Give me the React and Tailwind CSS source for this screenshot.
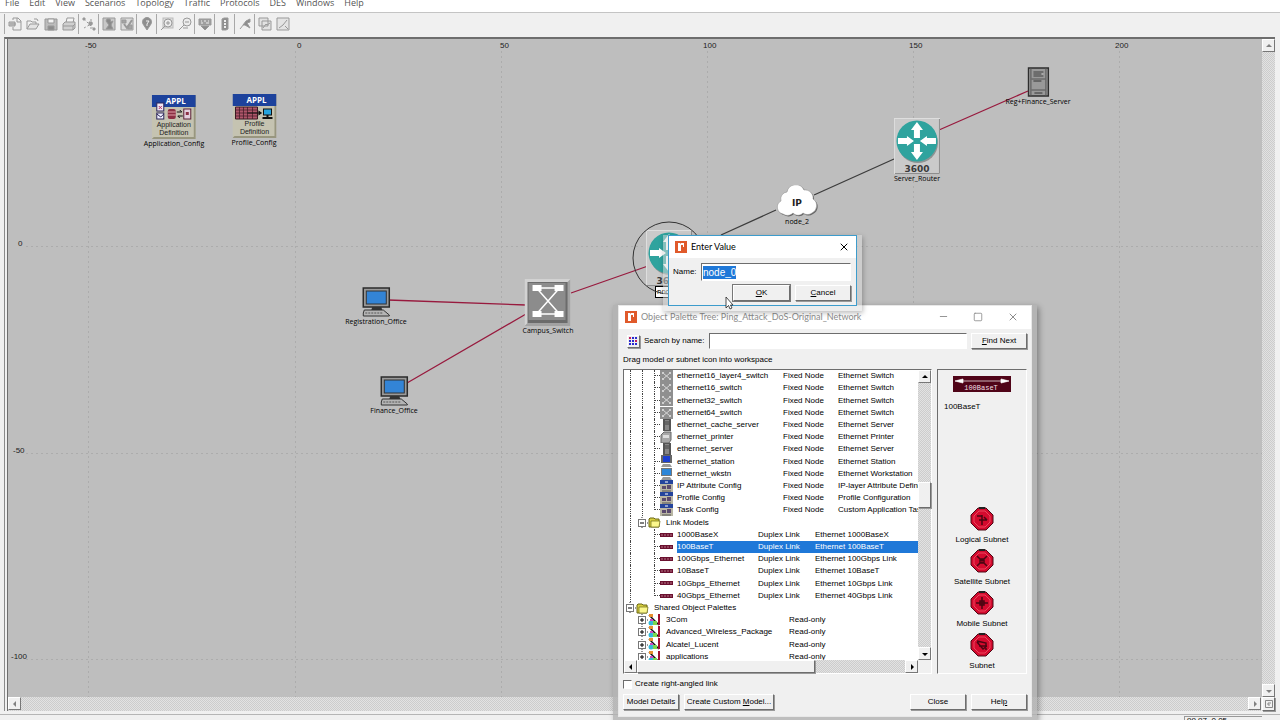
import { useState } from "react";
import { Minus, Square, X } from "lucide-react";

const menus = ["File", "Edit", "View", "Scenarios", "Topology", "Traffic", "Protocols", "DES", "Windows", "Help"];

const toolGroups = [
  ["New", "Open", "Save", "Print"],
  ["Palette"],
  ["Fail", "Recover"],
  ["Location"],
  ["Zoom In", "Zoom Out"],
  ["Traffic"],
  ["Run"],
  ["Results"],
  ["View Results", "Hide Graphs"],
];

const toolArt = {
  "New": <><path d="M5 3V1h5l3 3v9H5v-3" /><path d="M1 5h6v4H1z" fill="#c8c8c8" /><path d="M9 1v4h4M2 7h6" /></>,
  "Open": <><path d="M1 12V4h4l1 1h4v2" /><path d="M1 12l3-5h9l-3 5z" fill="#e4e4e4" /><path d="M8 2h3l1 2" /></>,
  "Save": <><path d="M1 2h12v11H1z" fill="#bcbcbc" /><path d="M4 2h6v4H4z" fill="#f4f4f4" /><path d="M4 9h6v4H4z" fill="#8c8c8c" /></>,
  "Print": <><path d="M4 6l1-5h7l-1 5" fill="#f4f4f4" /><path d="M1 7l2-2h10v6l-2 2H1z" fill="#d0d0d0" /><path d="M1 9h10v4M11 9l2-2" /></>,
  "Palette": <><path d="M2 2l4 4 5 5M2 11l9-5M9 2v10" strokeDasharray="2 2" /><path d="M1 1h2v2H1zM11 11h2v2h-2zM7 5h3v3H7z" fill="#999" /></>,
  "Fail": <><path d="M1 1h12v12H1z" fill="#c8c8c8" /><path d="M5 2h3l1 3 2-1-2 4 2 4H4l3-4-3-4z" fill="#8a8a8a" /></>,
  "Recover": <><path d="M1 1h12v12H1z" fill="#dcdcdc" /><path d="M2 3h4v3H2zM8 8h4v4H8z" fill="#a4a4a4" /><path d="M4 7l3 4 5-8" strokeWidth="2" /></>,
  "Location": <><path d="M7 13L3 7a4.500 4.500 0 1 1 8 0z" fill="#8e8e8e" /><path d="M6 4h3L7 7v2" stroke="#f0f0f0" /></>,
  "Zoom In": <><rect x="3" y="1" width="10" height="10" fill="#dedede" stroke="#bbb" /><circle cx="8" cy="6" r="4" fill="#ececec" /><path d="M5 9l-4 4M6 6h4M8 4v4" /></>,
  "Zoom Out": <><circle cx="9" cy="5" r="4" fill="#ececec" /><path d="M6 8l-5 5M7 5h4M5 11h5" /></>,
  "Traffic": <><path d="M1 2h12v6H1z" fill="#a0a0a0" /><path d="M3 4h1M6 4h2M10 4h1M3 6h2M8 6h3" stroke="#eee" /><path d="M3 9h8l-4 4z" fill="#8c8c8c" /></>,
  "Run": <><path d="M4 2l2-1h4v11l-2 1H4z" fill="#8f8f8f" /><path d="M6 4h2M6 7h2M6 10h2" stroke="#eee" strokeWidth="2" /></>,
  "Results": <><path d="M2 12l4-5" /><path d="M5 8l3-4 4-2v3L9 6l3 5-5-3z" fill="#8c8c8c" /></>,
  "View Results": <><path d="M1 1h9v8H1zM4 4h9v9H4z" fill="#e2e2e2" /><path d="M5 11l3-4 1 1 3-2" /></>,
  "Hide Graphs": <><path d="M1 1h12v12H1z" fill="#e4e4e4" /><path d="M3 11l4-3 4-5M9 9l3 3" /></>,
};

const folder = (
  <svg viewBox="0 0 13 12" className="h-3 w-[13px]">
    <path d="M1 3l1-1h4l1 1h4v8H1z" fill="#d8d040" stroke="#6b6714" />
    <path d="M3 5h9l-1 6H3z" fill="#fbf78c" stroke="#6b6714" strokeWidth=".7" />
  </svg>
);

const rowArt = {
  sw: <><rect width="13" height="12" fill="#8f8f8f" /><path d="M3 3l7 6M10 3L3 9" stroke="#d8d8d8" /><path d="M2 2h2v2H2zM9 2h2v2H9zM2 8h2v2H2zM9 8h2v2H9z" fill="#d0d0d0" /></>,
  server: <><rect x="3" width="8" height="12" fill="#555" /><rect x="5" y="1" width="4" height="10" fill="#888" /><path d="M5 3h4M5 5h4" stroke="#444" /></>,
  printer: <><path d="M1 4l3-3h7v8l-2 3H1z" fill="#a7a7a7" stroke="#666" /><path d="M3 4h6v3H3z" fill="#ddd" /></>,
  station: <><rect x="1" width="11" height="8" fill="#666" /><rect x="3" y="1" width="7" height="6" fill="#1c3fd0" /><path d="M3 9h7l2 3H1z" fill="#999" /></>,
  wkstn: <><rect x="1" width="11" height="8" fill="#777" /><rect x="2" y="1" width="9" height="6" fill="#2d86d8" /><path d="M3 9h7l2 3H1z" fill="#999" /></>,
  config: <><rect width="13" height="12" fill="#b9b6a4" /><rect width="13" height="4" fill="#24449c" /><path d="M5 2h3" stroke="#fff" /><path d="M2 6h4v3H2zM7 5h4v4H7z" fill="#5b4a6e" /><path d="M2 11h9" stroke="#555" /></>,
  link: <><path d="M0 4h13v4H0z" fill="#6b1030" /><path d="M1 6h11" stroke="#b87888" strokeDasharray="2 1" /></>,
  shared: <><path d="M1 1l10 10" stroke="#111" strokeWidth="1.500" /><path d="M11 0v11" stroke="#a01030" strokeWidth="2" /><circle cx="3" cy="9" r="2.500" fill="#35b8d8" /><path d="M1 0h4v3H1z" fill="#e89030" /><path d="M5 7h4v4H5z" fill="#7ad850" /><path d="M2 5h3v2H2z" fill="#d048c0" /></>,
};

const fixed = (name, type, icon) => ({ cells: ["V", "V", "T"], icon, name, kind: "Fixed Node", type });
const duplex = (name, type, last) => ({ cells: ["V", "", last ? "L" : "T"], icon: "link", name, kind: "Duplex Link", type });
const shared = (name) => ({ cells: ["", "+"], icon: "shared", name, kind: "Read-only" });

const rows = [
  fixed("ethernet16_layer4_switch", "Ethernet Switch", "sw"),
  fixed("ethernet16_switch", "Ethernet Switch", "sw"),
  fixed("ethernet32_switch", "Ethernet Switch", "sw"),
  fixed("ethernet64_switch", "Ethernet Switch", "sw"),
  fixed("ethernet_cache_server", "Ethernet Server", "server"),
  fixed("ethernet_printer", "Ethernet Printer", "printer"),
  fixed("ethernet_server", "Ethernet Server", "server"),
  fixed("ethernet_station", "Ethernet Station", "station"),
  fixed("ethernet_wkstn", "Ethernet Workstation", "wkstn"),
  fixed("IP Attribute Config", "IP-layer Attribute Definer", "config"),
  fixed("Profile Config", "Profile Configuration", "config"),
  { ...fixed("Task Config", "Custom Application Task", "config"), cells: ["V", "V", "L"] },
  { cells: ["V", "-"], name: "Link Models" },
  duplex("1000BaseX", "Ethernet 1000BaseX"),
  duplex("100BaseT", "Ethernet 100BaseT"),
  duplex("100Gbps_Ethernet", "Ethernet 100Gbps Link"),
  duplex("10BaseT", "Ethernet 10BaseT"),
  duplex("10Gbps_Ethernet", "Ethernet 10Gbps Link"),
  duplex("40Gbps_Ethernet", "Ethernet 40Gbps Link", true),
  { cells: ["-"], name: "Shared Object Palettes" },
  shared("3Com"),
  shared("Advanced_Wireless_Package"),
  shared("Alcatel_Lucent"),
  shared("applications"),
];

const raised = "border border-t-white border-l-white border-r-[#6d6d6d] border-b-[#6d6d6d] bg-[#f0f0f0] shadow-[1px_1px_0_#9a9a9a]";
const sunken = "border border-t-[#6d6d6d] border-l-[#6d6d6d] border-r-white border-b-white";
const track = "bg-[#d6d6d6] bg-[repeating-conic-gradient(#cccccc_0_25%,#e2e2e2_0_50%)] bg-[length:2px_2px]";

const arrows = { up: "M2 6l3-3 3 3z", down: "M2 4l3 3 3-3z", left: "M6 2L3 5l3 3z", right: "M4 2l3 3-3 3z" };

function ScrollArrow({ dir, dim }) {
  return (
    <button aria-label={`Scroll ${dir}`} className="grid size-[13px] shrink-0 place-items-center border border-t-white border-l-white border-r-[#777] border-b-[#777] bg-[#f0f0f0]">
      <svg viewBox="0 0 10 10" className="size-[10px]"><path d={arrows[dir]} fill={dim ? "#808080" : "#000"} /></svg>
    </button>
  );
}

function Logo() {
  return (
    <svg viewBox="0 0 12 12" className="size-3 shrink-0">
      <rect width="12" height="12" fill="#e05a2b" />
      <path d="M3 2h2l1 1v7H3zM6 2h3v4H8V4H6z" fill="#fff" />
    </svg>
  );
}

function Button({ children, className }) {
  return <button className={`${raised} h-4 whitespace-nowrap leading-3 ${className}`}>{children}</button>;
}

// One indent step of the tree: guide line, branch, or expander box
function Cell({ kind }) {
  if (kind === "+" || kind === "-") {
    return (
      <span className="grid w-3 shrink-0 place-items-center">
        <svg viewBox="0 0 12 12" className="h-3 w-3">
          <path d="M6 0v12M9 6h3" stroke="#333" strokeDasharray="1 1" />
          <rect x="2.500" y="2.500" width="7" height="7" fill="#fff" stroke="#777" />
          <path d={kind === "+" ? "M4 6h4M6 4v4" : "M4 6h4"} stroke="#000" />
        </svg>
      </span>
    );
  }
  return (
    <span className="flex w-3 shrink-0 pl-1.5">
      <span className={`w-1.5 ${kind === "V" || kind === "T" ? "border-l border-dotted border-[#444]" : ""}`}>
        {kind === "T" && <span className="block h-1/2 border-b border-dotted border-[#444]" />}
        {kind === "L" && <span className="block h-1/2 border-b border-l border-dotted border-[#444]" />}
      </span>
    </span>
  );
}

function TreeRow({ row, selected, onSelect }) {
  const link = row.kind === "Duplex Link";
  const ro = row.kind === "Read-only";
  const kindWidth = link ? "w-[57px]" : "w-[55px]";
  const nameWidth = link ? "w-[81px]" : ro ? "w-[123px]" : row.kind ? "w-[106px]" : "w-[180px]";
  return (
    <div role="treeitem" aria-selected={selected} onClick={onSelect} className="flex min-h-0 flex-1 whitespace-nowrap">
      {row.cells.map((c, i) => <Cell key={i} kind={c} />)}
      {row.icon ? <svg viewBox="0 0 13 12" className="h-3 w-[13px] shrink-0">{rowArt[row.icon]}</svg> : folder}
      <div className={`flex flex-1 items-center ${row.cells.length === 3 ? "ml-1" : "ml-[5px]"} ${selected ? "bg-[#1f78d8] text-white" : ""}`}>
        <span className={`${nameWidth} shrink-0 leading-3`}>{row.name}</span>
        <span className={`${kindWidth} shrink-0 leading-3`}>{row.kind}</span>
        <span className="leading-3">{row.type}</span>
      </div>
    </div>
  );
}

function RouterIcon() {
  return (
    <svg viewBox="0 0 46 56" className="h-14 w-[46px]">
      <rect x=".5" y=".5" width="45" height="55" fill="#cacaca" stroke="#dedede" />
      <path d="M45.500 1v54.500H1" fill="none" stroke="#8d8d8d" />
      <circle cx="24" cy="25" r="20" fill="#8d9393" />
      <circle cx="23" cy="23" r="20.500" fill="#2fa39e" />
      <path d="M23 4l6 8h-3v8h-6v-8h-3zM23 42l-6-8h3v-8h6v8h3zM20 23l-7 5v-2H4v-6h9v-2zM26 23l7-5v2h9v6h-9v2z" fill="#fff" />
      <text x="23" y="54" textAnchor="middle" fontSize="9" fontWeight="700" fill="#3a3a3a" fontFamily="DejaVu Sans, sans-serif">3600</text>
    </svg>
  );
}

function ComputerIcon() {
  return (
    <svg viewBox="0 0 30 30" className="size-[30px]">
      <rect x="2" y="1" width="26" height="19" fill="#9a9a9a" stroke="#2b2b2b" strokeWidth="1.500" />
      <rect x="5" y="4" width="20" height="13" fill="#3384d6" stroke="#333" />
      <path d="M11 20h9l1 3H10z" fill="#333" />
      <path d="M3 23h19l6 5v1H2v-3z" fill="#b5b5b5" stroke="#333" />
      <path d="M4 26h17" stroke="#555" strokeDasharray="2 1" />
    </svg>
  );
}

function ServerIcon() {
  return (
    <svg viewBox="0 0 22 30" className="h-[30px] w-[22px]">
      <rect x="1" y="1" width="20" height="28" fill="#999" stroke="#2e2e2e" strokeWidth="1.500" />
      <path d="M3.500 1v28M18.500 1v28M4 12h14M4 23h14" stroke="#555" fill="none" />
      <path d="M6 4h10v6H6z" fill="#a8a8a8" />
      <path d="M6 5h10M6 7h8M6 9h10M6 14h8M7 26h8" stroke="#333" />
    </svg>
  );
}

function SwitchIcon() {
  return (
    <svg viewBox="0 0 46 47" className="h-[47px] w-[46px]">
      <rect width="46" height="47" fill="#d2d2d2" />
      <path d="M46 0v47H0l4-4h38V4z" fill="#a2a2a2" />
      <rect x="3" y="3" width="40" height="41" fill="#6b6b6b" />
      <rect x="4" y="4" width="37" height="37" fill="#8c8c8c" />
      <path d="M12 9h23M12 35h23M12 9l23 26M35 9L12 35" stroke="#fff" strokeWidth="1.500" />
      <path d="M8 6h9v6H8zM30 6h9v6h-9zM8 32h9v6H8zM30 32h9v6h-9z" fill="#fff" />
    </svg>
  );
}

function ConfigIcon({ profile }) {
  return (
    <svg viewBox="0 0 44 44" className="size-11">
      <rect width="44" height="44" fill="#c5c3b1" />
      <path d="M44 0v44H0l2-2h40V2z" fill="#98967f" />
      <rect width="44" height="12" fill="#1d429c" />
      <text x="24" y="9" textAnchor="middle" fontSize="8" fontWeight="700" fill="#fff" fontFamily="Open Sans, sans-serif">APPL</text>
      {profile ? (
        <>
          <path d="M3 13h22v12H3z" fill="#b0566a" stroke="#3b1822" />
          <path d="M3 16h22M3 19h22M3 22h22M7 13v12M11 13v12M15 13v12M20 13v12" stroke="#3b1822" strokeWidth=".7" />
          <path d="M15 19h13M26 17l3 2-3 2" stroke="#111" fill="#111" />
          <rect x="31" y="15" width="8" height="6" fill="#26a4de" stroke="#111" />
          <path d="M35 21v3M30 24h10" stroke="#111" strokeWidth="2" />
        </>
      ) : (
        <>
          <rect x="5" y="8" width="7" height="8" fill="#f0e6f4" stroke="#2b2558" />
          <path d="M7 11l3 3M10 11l-3 3" stroke="#b03060" />
          <rect x="5" y="18" width="7" height="6" fill="#f0f0ff" stroke="#2b2558" />
          <path d="M5 19l4 3 3-3" stroke="#2b2558" fill="none" />
          <rect x="16" y="14" width="8" height="10" rx="2" fill="#8c3044" />
          <path d="M16 17h8M16 20h8" stroke="#e0a0a8" />
          <path d="M25 17h5l-2-2M31 21h-5l2 2" stroke="#111" fill="none" />
          <rect x="32" y="14" width="7" height="10" fill="#e4d0dc" stroke="#5b2036" />
          <rect x="34" y="17" width="3" height="3" fill="#8c3044" />
        </>
      )}
      <g fontSize="7" fill="#222" textAnchor="middle" fontFamily="Liberation Sans, sans-serif">
        <text x="22" y="32">{profile ? "Profile" : "Application"}</text>
        <text x="22" y="40">Definition</text>
      </g>
    </svg>
  );
}

const cloud = "M8 29a7 7 0 0 1-2-13 7 7 0 0 1 6-9 9 9 0 0 1 17-2 8 8 0 0 1 9 9 8 8 0 0 1-1 14c-3 2-6 2-9 0-3 3-7 3-10 0-3 3-7 3-10 1z";

function CloudIcon() {
  return (
    <svg viewBox="0 0 44 32" className="h-8 w-11">
      <path d={cloud} fill="#666" transform="translate(1 1)" />
      <path d={cloud} fill="#fff" stroke="#888" strokeWidth=".5" />
      <text x="22" y="21" textAnchor="middle" fontSize="9" fontWeight="700" fill="#222" fontFamily="DejaVu Sans, sans-serif">IP</text>
    </svg>
  );
}

const nodes = [
  { label: "Application_Config", at: "left-[166px] top-[56px]", icon: <ConfigIcon /> },
  { label: "Profile_Config", at: "left-[246px] top-[55px]", icon: <ConfigIcon profile /> },
  { label: "Registration_Office", at: "left-[368px] top-[248px]", icon: <ComputerIcon /> },
  { label: "Finance_Office", at: "left-[386px] top-[337px]", icon: <ComputerIcon /> },
  { label: "Campus_Switch", at: "left-[540px] top-[240px]", icon: <SwitchIcon /> },
  { label: "node_0", at: "left-[661px] top-[191px]", icon: <RouterIcon />, active: true },
  { label: "node_2", at: "left-[789px] top-[146px]", icon: <CloudIcon /> },
  { label: "Server_Router", at: "left-[909px] top-[79px]", icon: <RouterIcon /> },
  { label: "Reg+Finance_Server", at: "left-[1030px] top-[28px]", icon: <ServerIcon /> },
];

const ticks = [
  { text: "-50", at: "left-[77px] top-[2px]" },
  { text: "0", at: "left-[289px] top-[2px]" },
  { text: "50", at: "left-[492px] top-[2px]" },
  { text: "100", at: "left-[695px] top-[2px]" },
  { text: "150", at: "left-[901px] top-[2px]" },
  { text: "200", at: "left-[1107px] top-[2px]" },
  { text: "0", at: "left-[10px] top-[200px]" },
  { text: "-50", at: "left-[5px] top-[407px]" },
  { text: "-100", at: "left-[3px] top-[613px]" },
];

function Canvas() {
  return (
    <section className="relative min-h-0 flex-1 overflow-hidden bg-[#bebebe]">
      <svg className="absolute inset-0 h-full w-full">
        <g stroke="#acacac" strokeDasharray="2 3">
          {[80, 287, 493, 699, 905, 1111].map((x) => <line key={x} x1={x + 0.5} x2={x + 0.5} y1="12" y2="100%" />)}
          {[207, 414, 620].map((y) => <line key={y} x1="18" x2="100%" y1={y + 0.5} y2={y + 0.5} />)}
        </g>
        <g stroke="#981a3e" strokeWidth="1.300">
          <path d="M380 261L518 266M399 344L518 275M563 254L640 227M931 91L1020 52" />
        </g>
        <path d="M713 196L768 171M806 156L886 120" stroke="#3c3c3c" strokeWidth="1.300" />
      </svg>
      {ticks.map((t, i) => (
        <span key={i} className={`absolute ${t.at} text-[8px] leading-[10px] text-[#222]`}>{t.text}</span>
      ))}
      {nodes.map((n) => (
        <div key={n.label} className={`absolute ${n.at} flex -translate-x-1/2 flex-col items-center`}>
          {n.icon}
          <span className={`font-['Open_Sans',sans-serif] text-[7px] leading-[10px] ${n.active ? "border border-black bg-white px-px" : ""}`}>{n.label}</span>
        </div>
      ))}
      <svg className="absolute left-[624px] top-[182px] size-[74px]" viewBox="0 0 74 74">
        <circle cx="37" cy="37" r="36" fill="none" stroke="#333" />
      </svg>
    </section>
  );
}

const subnetArt = {
  "Logical Subnet": "M7 9h5v4h5M12 8v10M9 13h8M14 10l3 3",
  "Satellite Subnet": "M7 7l10 10M17 7L7 17M10 10h4v4h-4z",
  "Mobile Subnet": "M12 6v12M6 12h12M10 10h4v4h-4z",
  "Subnet": "M7 8l9 2v7M7 9l6 7 4-3M9 13h8",
};

function Subnet({ label }) {
  return (
    <button className="flex flex-col items-center pt-0.5">
      <svg viewBox="0 0 24 24" className="size-6">
        <path d="M8 1h8l7 7v8l-7 7H8l-7-7V8z" fill="#d40a2e" stroke="#4a0814" />
        <path d="M9 4h6l5 5v6l-5 5H9l-5-5V9z" fill="none" stroke="#f0556a" strokeWidth=".8" />
        <path d={subnetArt[label]} fill="none" stroke="#4a0612" strokeWidth="1.500" />
        <path d="M9 1h6" stroke="#222" strokeWidth="2" />
      </svg>
      <span className="mt-0.5 leading-[14px]">{label}</span>
    </button>
  );
}

function PaletteWindow() {
  const [selected, setSelected] = useState("100BaseT");
  const [search, setSearch] = useState("");
  return (
    <div className="absolute left-[613px] top-[305px] border-x-[5px] border-b-4 border-[#b2b2b2]/80 shadow-[2px_2px_6px_#0005]">
      <div className="flex h-[412px] w-[414px] flex-col border border-[#e8e8e8] bg-[#f0f0f0]">
        <div className="flex h-[23px] shrink-0 items-center bg-white pb-0.5 pl-1.5 pr-3 text-[#8c8c8c]">
          <Logo />
          <h2 className="ml-1 flex-1 font-['Lato',sans-serif] text-[9px] leading-3">Object Palette Tree: Ping_Attack_DoS-Original_Network</h2>
          <div className="flex items-center gap-6">
            <button aria-label="Minimize"><Minus size={11} strokeWidth={2} /></button>
            <button aria-label="Maximize"><Square size={10} strokeWidth={2} /></button>
            <button aria-label="Close"><X size={12} strokeWidth={2} /></button>
          </div>
        </div>
        <div className="flex min-h-0 flex-1 flex-col px-1 pb-[6px] pt-1">
          <div className="flex shrink-0 items-center">
            <button aria-label="Icon view" className={`${raised} ml-1 grid size-[13px] place-items-center`}>
              <svg viewBox="0 0 9 9" className="size-[9px]">
                <path d="M0 1h9M0 4h9M0 7h9" stroke="#2a2ad0" strokeWidth="2" strokeDasharray="2 1" />
                <path d="M0 1h3M6 4h3" stroke="#c02060" strokeWidth="2" strokeDasharray="2 1" />
              </svg>
            </button>
            <label htmlFor="search" className="ml-1 w-[65px] whitespace-nowrap">Search by name:</label>
            <input id="search" value={search} onChange={(e) => setSearch(e.target.value)} className={`${sunken} h-4 min-w-0 flex-1 bg-white px-1 outline-none`} />
            <Button className="ml-1 w-14"><u>F</u>ind Next</Button>
          </div>
          <p className="mb-0.5 mt-1 leading-[14px]">Drag model or subnet icon into workspace</p>
          <div className="flex min-h-0 flex-1 gap-[5px]">
            <div className={`${sunken} flex min-w-0 flex-1 flex-col bg-white`}>
              <div className="flex min-h-0 flex-1">
                <div className="min-w-0 flex-1 overflow-hidden">
                  <div role="tree" className="flex h-[293px] flex-col">
                    {rows.map((r) => (
                      <TreeRow key={r.name} row={r} selected={selected === r.name} onSelect={() => setSelected(r.name)} />
                    ))}
                  </div>
                </div>
                <div className={`flex w-[13px] flex-col ${track}`}>
                  <ScrollArrow dir="up" />
                  <div className="flex-[100]" />
                  <div className={`${raised} h-[26px]`} />
                  <div className="flex-[140]" />
                  <ScrollArrow dir="down" />
                </div>
              </div>
              <div className="flex h-[13px] shrink-0 bg-[#f0f0f0]">
                <div className={`flex flex-1 ${track}`}>
                  <ScrollArrow dir="left" />
                  <div className={`${raised} w-[178px]`} />
                  <div className="flex-1" />
                  <ScrollArrow dir="right" />
                </div>
                <div className="w-[13px]" />
              </div>
            </div>
            <div className={`${sunken} flex w-[90px] shrink-0 flex-col px-1 pt-[6px]`}>
              <svg viewBox="0 0 58 16" className="h-4 w-[58px] self-center">
                <rect width="58" height="16" fill="#500418" />
                <path d="M4 5h50M2 5l8-2v4zM56 5l-8-2v4z" stroke="#fff" fill="#fff" strokeWidth=".7" />
                <text x="28" y="14" textAnchor="middle" fontSize="7" fill="#f0dfe2" fontFamily="Liberation Mono, monospace">100BaseT</text>
              </svg>
              <span className="ml-[2px] mt-2 leading-[14px]">100BaseT</span>
              <div className="mt-auto flex flex-col">
                {Object.keys(subnetArt).map((s) => <Subnet key={s} label={s} />)}
              </div>
            </div>
          </div>
          <label className="mt-1 flex h-3 shrink-0 items-center gap-[3px]">
            <input type="checkbox" className={`${sunken} size-[9px] appearance-none bg-white`} />
            Create right-angled link
          </label>
          <div className="mt-1 flex shrink-0 gap-[5px]">
            <Button className="w-14">Model Details</Button>
            <Button className="w-[90px]">Create Custom <u>M</u>odel...</Button>
            <Button className="ml-auto w-14">Close</Button>
            <Button className="w-14">Hel<u>p</u></Button>
          </div>
        </div>
      </div>
    </div>
  );
}

function EnterValueDialog() {
  const [name, setName] = useState("node_0");
  return (
    <form onSubmit={(e) => e.preventDefault()} className="absolute left-[663px] top-[235px] border-x-[5px] border-b-[5px] border-[#dcdcdc]/50 shadow-[1px_2px_5px_#0004]">
      <div className="w-[189px] border border-[#3d9ccc] bg-[#f0f0f0]">
        <div className="flex h-[22px] items-center bg-white px-1.5">
          <Logo />
          <h2 className="ml-1 flex-1 font-['Lato',sans-serif] text-[9px] leading-3">Enter Value</h2>
          <button type="button" aria-label="Close"><X size={12} strokeWidth={2} /></button>
        </div>
        <div className="flex items-center pl-1 pr-[5px] pt-[5px]">
          <label htmlFor="name" className="w-7">Name:</label>
          <div className={`${sunken} flex h-[18px] flex-1 items-center bg-white px-px`}>
            <input id="name" value={name} onChange={(e) => setName(e.target.value)} className="h-[13px] w-[33px] bg-[#1f78d8] text-[10px] text-white outline-none" />
          </div>
        </div>
        <div className="flex justify-end gap-[5px] py-1 pr-[5px]">
          <Button className="w-[57px] outline outline-[#777]"><u>O</u>K</Button>
          <Button className="w-[56px]"><u>C</u>ancel</Button>
        </div>
      </div>
    </form>
  );
}

export default function App() {
  return (
    <div className="relative flex h-screen flex-col overflow-hidden bg-[#f0f0f0] font-['Liberation_Sans',sans-serif] text-[8px] text-black">
      <nav className="-mt-1.5 flex h-[18px] shrink-0 items-center gap-[10px] bg-white pl-[5px] font-['Open_Sans',sans-serif] text-[9px] text-[#555]">
        {menus.map((m) => <button key={m}>{m}</button>)}
      </nav>
      <div className="flex h-[25px] shrink-0 items-center border-t border-[#c4c4c4] pb-0.5 pl-1">
        {toolGroups.map((group) => (
          <div key={group[0]} className="flex h-5 items-center gap-1 border-l border-[#a8a8a8] pl-[3px] pr-0.5">
            {group.map((t) => (
              <button key={t} aria-label={t}>
                <svg viewBox="0 0 14 14" className="size-[14px]" fill="none" stroke="#999">{toolArt[t]}</svg>
              </button>
            ))}
          </div>
        ))}
      </div>
      <main className="ml-1 mr-[5px] flex min-h-0 flex-1 flex-col border-l border-t-2 border-l-[#8a8a8a] border-t-[#6e6e6e] pl-[2px]">
        <div className="flex min-h-0 flex-1 border-l border-[#6e6e6e]">
          <Canvas />
          <div className={`flex w-[13px] flex-col justify-between ${track}`}>
            <ScrollArrow dir="up" dim />
            <ScrollArrow dir="down" dim />
          </div>
        </div>
        <div className="flex h-[14px] shrink-0 border-l border-[#6e6e6e]">
          <div className={`flex flex-1 justify-between ${track}`}>
            <ScrollArrow dir="left" dim />
            <ScrollArrow dir="right" dim />
          </div>
          <button aria-label="Fit view" className={`${raised} ml-px grid w-[13px] place-items-center`}>
            <svg viewBox="0 0 8 8" className="size-2" fill="none" stroke="#888"><path d="M.5.500h7v7h-7zM3 5V3h3M3 5h2" /></svg>
          </button>
        </div>
      </main>
      <footer className="mt-[3px] flex h-[6px] shrink-0 justify-end overflow-hidden border-t border-[#b5b5b5] pt-px">
        <span className="mr-[18px] w-[78px] border-l border-t border-[#999] pl-0.5 leading-[8px]">99.97, 0.05</span>
      </footer>
      <PaletteWindow />
      <EnterValueDialog />
      <svg viewBox="0 0 9 14" className="absolute left-[725px] top-[296px] h-[14px] w-[9px]">
        <path d="M1 1v11l2.500-2.500L5 13l2-1-1.500-3H8z" fill="#fff" stroke="#222" strokeWidth=".8" />
      </svg>
    </div>
  );
}
